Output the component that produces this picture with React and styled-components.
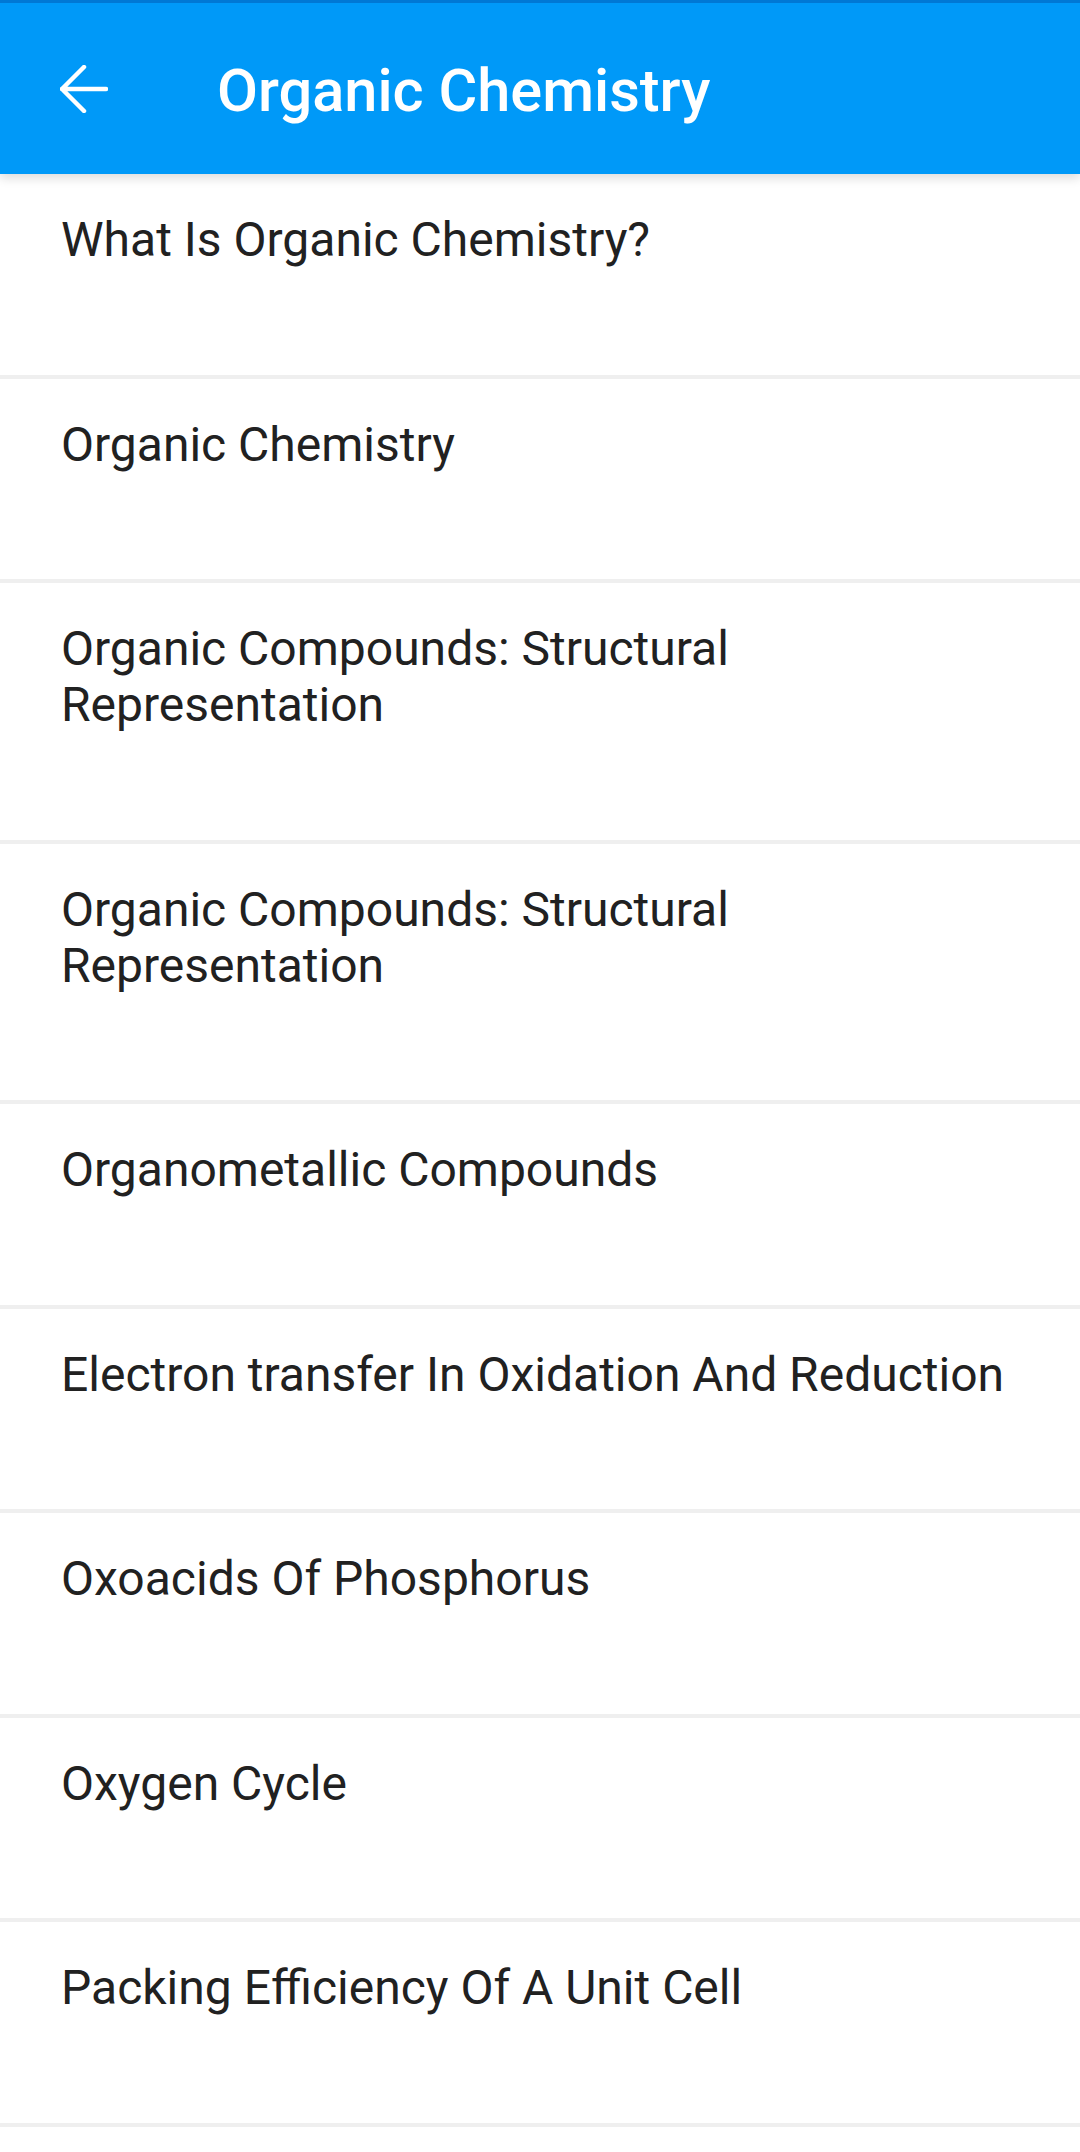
import React from 'react'
import styled, { createGlobalStyle } from 'styled-components'

const GlobalStyle = createGlobalStyle`
  body {
    margin: 0;
    background-color: #ffffff;
    font-family: Roboto, "Noto Sans", sans-serif;
    color: #212121;
  }
`

const Page = styled.div`
  min-height: 2152px;
  background: #ffffff;
`

const AppBar = styled.header`
  position: relative;
  z-index: 2;
  height: 171px;
  border-top: 3px solid #0078d4;
  background-color: #0099f8;
  display: flex;
  align-items: center;
  box-shadow: 0 4px 10px rgba(0, 0, 0, 0.14);
`

const BackButton = styled.button`
  width: 48px;
  height: 48px;
  margin-left: 60px;
  padding: 0;
  border: none;
  background: none;
  display: flex;
  align-items: center;
  justify-content: center;
  cursor: pointer;
`

const Title = styled.h1`
  margin: 5px 0 0 109px;
  font-size: 59.5px;
  font-weight: 500;
  color: #ffffff;
  letter-spacing: 0;
`

const List = styled.ul`
  list-style: none;
  margin: 0;
  padding: 0;
`

const Item = styled.li`
  padding: 38px 60px 106.5px 61px;
  border-bottom: 4px solid #efefef;
  font-size: 48px;
  line-height: 56px;
  color: #212121;
`

const topics = [
  'What Is Organic Chemistry?',
  'Organic Chemistry',
  'Organic Compounds: Structural Representation',
  'Organic Compounds: Structural Representation',
  'Organometallic Compounds',
  'Electron transfer In Oxidation And Reduction',
  'Oxoacids Of Phosphorus',
  'Oxygen Cycle',
  'Packing Efficiency Of A Unit Cell',
]

const ArrowBack = () => (
  <svg width="48" height="48" viewBox="0 0 48 48" fill="none">
    <path
      d="M46 24H2M24 2L2 24l22 22"
      stroke="#ffffff"
      strokeWidth="4.5"
      strokeLinecap="round"
      strokeLinejoin="round"
    />
  </svg>
)

const App = () => (
  <>
    <GlobalStyle />
    <Page>
      <AppBar>
        <BackButton aria-label="Back">
          <ArrowBack />
        </BackButton>
        <Title>Organic Chemistry</Title>
      </AppBar>
      <List>
        {topics.map((t, i) => (
          <Item key={i}>{t}</Item>
        ))}
      </List>
    </Page>
  </>
)

export default App
